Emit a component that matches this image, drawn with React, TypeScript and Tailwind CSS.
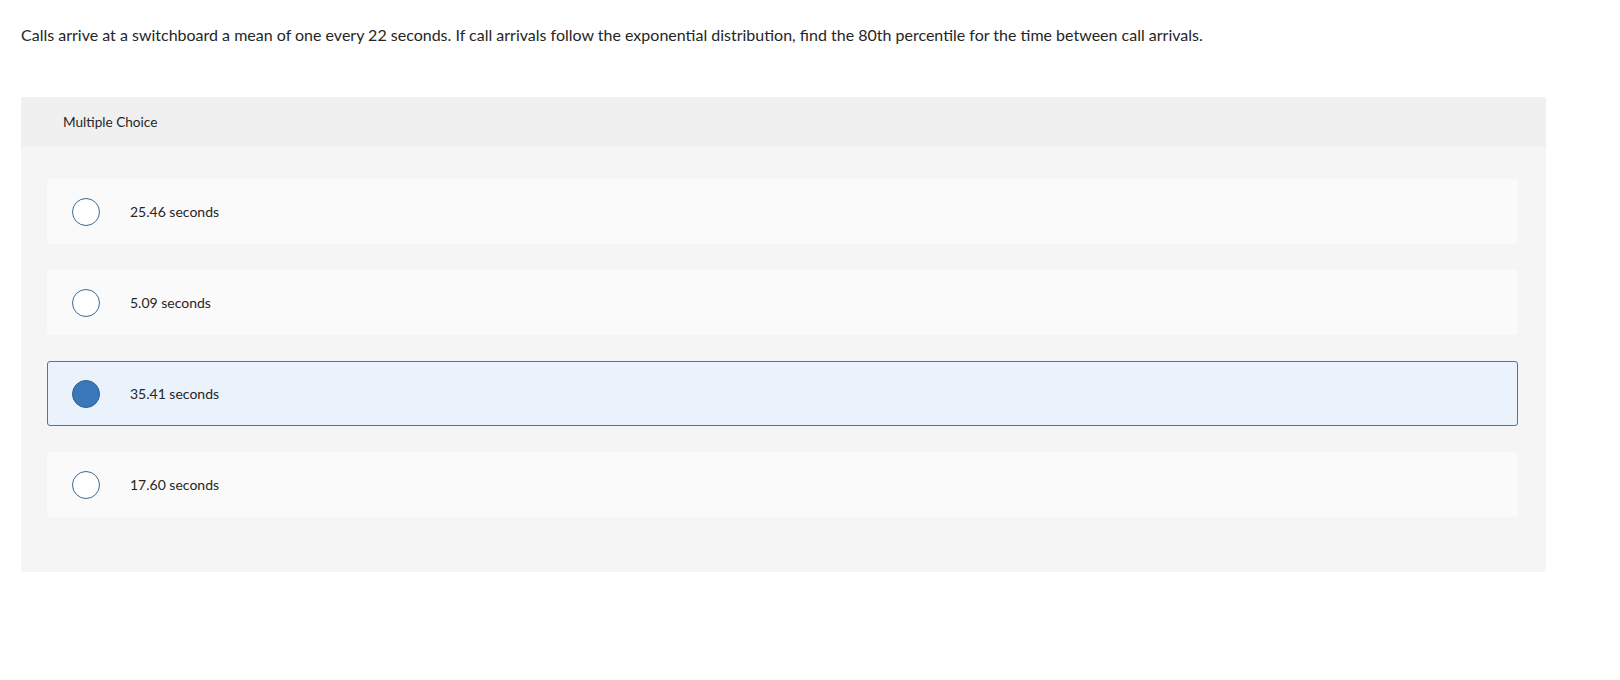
const options = [
  { label: "25.46 seconds", selected: false },
  { label: "5.09 seconds", selected: false },
  { label: "35.41 seconds", selected: true },
  { label: "17.60 seconds", selected: false },
];

export default function App() {
  return (
    <div className="min-h-[680px] w-[1620px] bg-white font-['Lato',sans-serif] text-[#262626]">
      <div className="pl-[21px] pr-[74px] pt-[25px]">
        <p className="text-[16px] leading-[19px]">
          Calls arrive at a switchboard a mean of one every 22 seconds. If call arrivals follow the
          exponential distribution, find the 80th percentile for the time between call arrivals.
        </p>
        <div className="mt-[53px] overflow-hidden rounded-[3px] bg-[#f5f5f5]">
          <div className="flex h-[50px] items-center bg-[#f0f0f0] pl-[42px] text-[13.6px]">
            Multiple Choice
          </div>
          <div className="flex flex-col gap-[26px] pb-[55px] pl-[26px] pr-[28px] pt-[32px]">
            {options.map((o) => (
              <div
                key={o.label}
                className={
                  o.selected
                    ? "flex h-[65px] items-center rounded-[3px] border border-[#3b78c0] bg-[#eaf2fb] pl-[24px]"
                    : "flex h-[65px] items-center rounded-[4px] border border-transparent bg-[#fafafa] pl-[24px]"
                }
              >
                <span
                  className={
                    o.selected
                      ? "h-[28px] w-[28px] shrink-0 rounded-full border border-[#2f5f94] bg-[#3b78b9]"
                      : "h-[28px] w-[28px] shrink-0 rounded-full border-[1.5px] border-[#3a6a96] bg-white"
                  }
                />
                <span className="ml-[30px] text-[14px]">{o.label}</span>
              </div>
            ))}
          </div>
        </div>
      </div>
    </div>
  );
}
